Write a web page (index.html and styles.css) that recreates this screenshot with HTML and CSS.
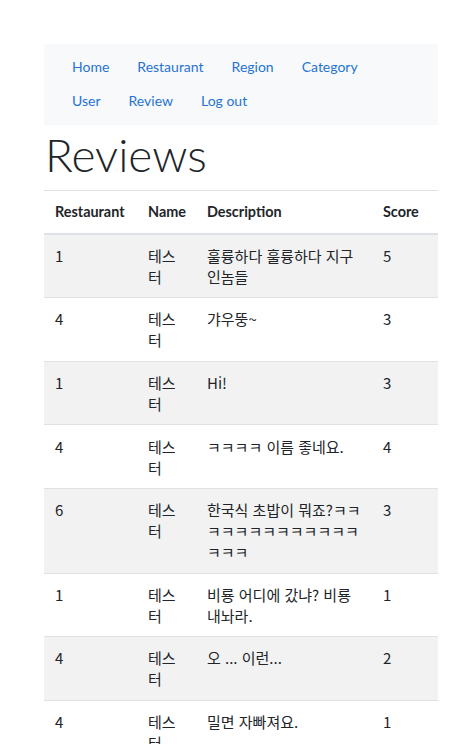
FILE: index.html
```html
<!DOCTYPE html>
<html lang="ko">
<head>
    <meta charset="UTF-8">
    <meta name="viewport" content="width=device-width, initial-scale=1.0">
    <title>Reviews</title>
    <link rel="stylesheet" href="styles.css">
</head>
<body>

<div class="container">
    <nav class="navbar">
        <a href="#" class="nav-link">Home</a>
        <a href="#" class="nav-link">Restaurant</a>
        <a href="#" class="nav-link">Region</a>
        <a href="#" class="nav-link">Category</a>
        <a href="#" class="nav-link">User</a>
        <a href="#" class="nav-link">Review</a>
        <a href="#" class="nav-link">Log out</a>
    </nav>

    <h1 class="titel">Reviews</h1>

    <table class="tabelle">
        <colgroup>
            <col class="col-restaurant">
            <col class="col-name">
            <col class="col-description">
            <col class="col-score">
        </colgroup>
        <thead>
            <tr>
                <th>Restaurant</th>
                <th>Name</th>
                <th>Description</th>
                <th>Score</th>
            </tr>
        </thead>
        <tbody>
            <tr><td>1</td><td>테스터</td><td>훌륭하다 훌륭하다 지구인놈들</td><td>5</td></tr>
            <tr><td>4</td><td>테스터</td><td>갸우뚱~</td><td>3</td></tr>
            <tr><td>1</td><td>테스터</td><td>Hi!</td><td>3</td></tr>
            <tr><td>4</td><td>테스터</td><td>ㅋㅋㅋㅋ 이름 좋네요.</td><td>4</td></tr>
            <tr><td>6</td><td>테스터</td><td>한국식 초밥이 뭐죠?ㅋㅋㅋㅋㅋㅋㅋㅋㅋㅋㅋㅋㅋㅋㅋㅋ</td><td>3</td></tr>
            <tr><td>1</td><td>테스터</td><td>비룡 어디에 갔냐? 비룡 내놔라.</td><td>1</td></tr>
            <tr><td>4</td><td>테스터</td><td>오 ... 이런...</td><td>2</td></tr>
            <tr><td>4</td><td>테스터</td><td>밀면 자빠져요.</td><td>1</td></tr>
        </tbody>
    </table>
</div>

</body>
</html>
```

FILE: styles.css
```css
body {
    font-family: Lato, "Noto Sans CJK KR", sans-serif;
    font-size: 14.4px;
    line-height: 21px;
    margin: 0;
    background: #fff;
    color: #212529;
}
.container {
    padding: 44px 36px 0 44px;
}
.navbar {
    display: flex;
    flex-wrap: wrap;
    padding: 5.5px 14px 7.5px 14px;
    background-color: #f8f9fa;
}
.nav-link {
    padding: 7px 14px;
    font-size: 14px;
    line-height: 20px;
    color: #2574d4;
    text-decoration: none;
}
.titel {
    font-size: 46px;
    font-weight: 300;
    line-height: 60px;
    margin: 0 0 5px 0;
    padding-left: 1px;
}
.tabelle {
    width: 100%;
    table-layout: fixed;
    border-collapse: collapse;
}
.col-restaurant { width: 93px; }
.col-name { width: 59px; }
.col-description { width: 176px; }
.col-score { width: 66px; }
.tabelle th,
.tabelle td {
    padding: 10.3px 11px;
    text-align: left;
    vertical-align: top;
    border-top: 1px solid #dee2e6;
}
.tabelle th {
    font-weight: bold;
    border-bottom: 2px solid #dee2e6;
}
.tabelle td {
    font-family: "Noto Sans CJK KR", sans-serif;
    font-size: 15px;
}
.tabelle tbody tr:nth-of-type(odd) {
    background-color: #f2f2f2;
}
```
